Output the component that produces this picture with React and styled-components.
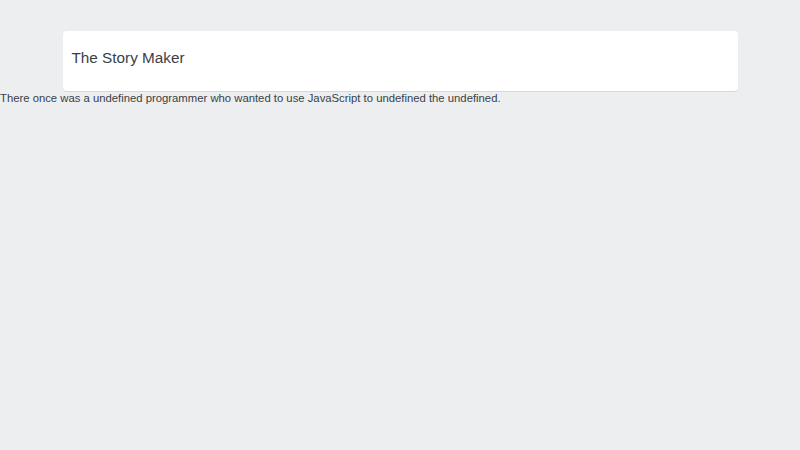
import React from 'react'
import styled, { createGlobalStyle } from 'styled-components'

const GlobalStyle = createGlobalStyle`
  html, body {
    margin: 0;
    padding: 0;
    background: #edeef0;
    font-family: "Liberation Sans", Arial, sans-serif;
    color: #3a3f47;
  }
`

const Page = styled.div`
  padding-top: 31px;
`

const Header = styled.header`
  width: 675px;
  height: 61px;
  margin: 0 auto;
  background: #ffffff;
  border-radius: 4px;
  border-bottom: 1px solid #d6d7d9;
  box-sizing: border-box;
  display: flex;
  align-items: center;
  padding: 0 9px 6px;
`

const Title = styled.h1`
  margin: 0;
  font-size: 15.3px;
  font-weight: 400;
  color: #3a3f47;
`

const Story = styled.p`
  margin: 0;
  font-size: 11.3px;
  line-height: 12px;
`

export default function App() {
  const name = undefined
  const verb = undefined
  const noun = undefined
  return (
    <>
      <GlobalStyle />
      <Page>
        <Header>
          <Title>The Story Maker</Title>
        </Header>
        <Story>
          There once was a {String(name)} programmer who wanted to use JavaScript to {String(verb)} the {String(noun)}.
        </Story>
      </Page>
    </>
  )
}
